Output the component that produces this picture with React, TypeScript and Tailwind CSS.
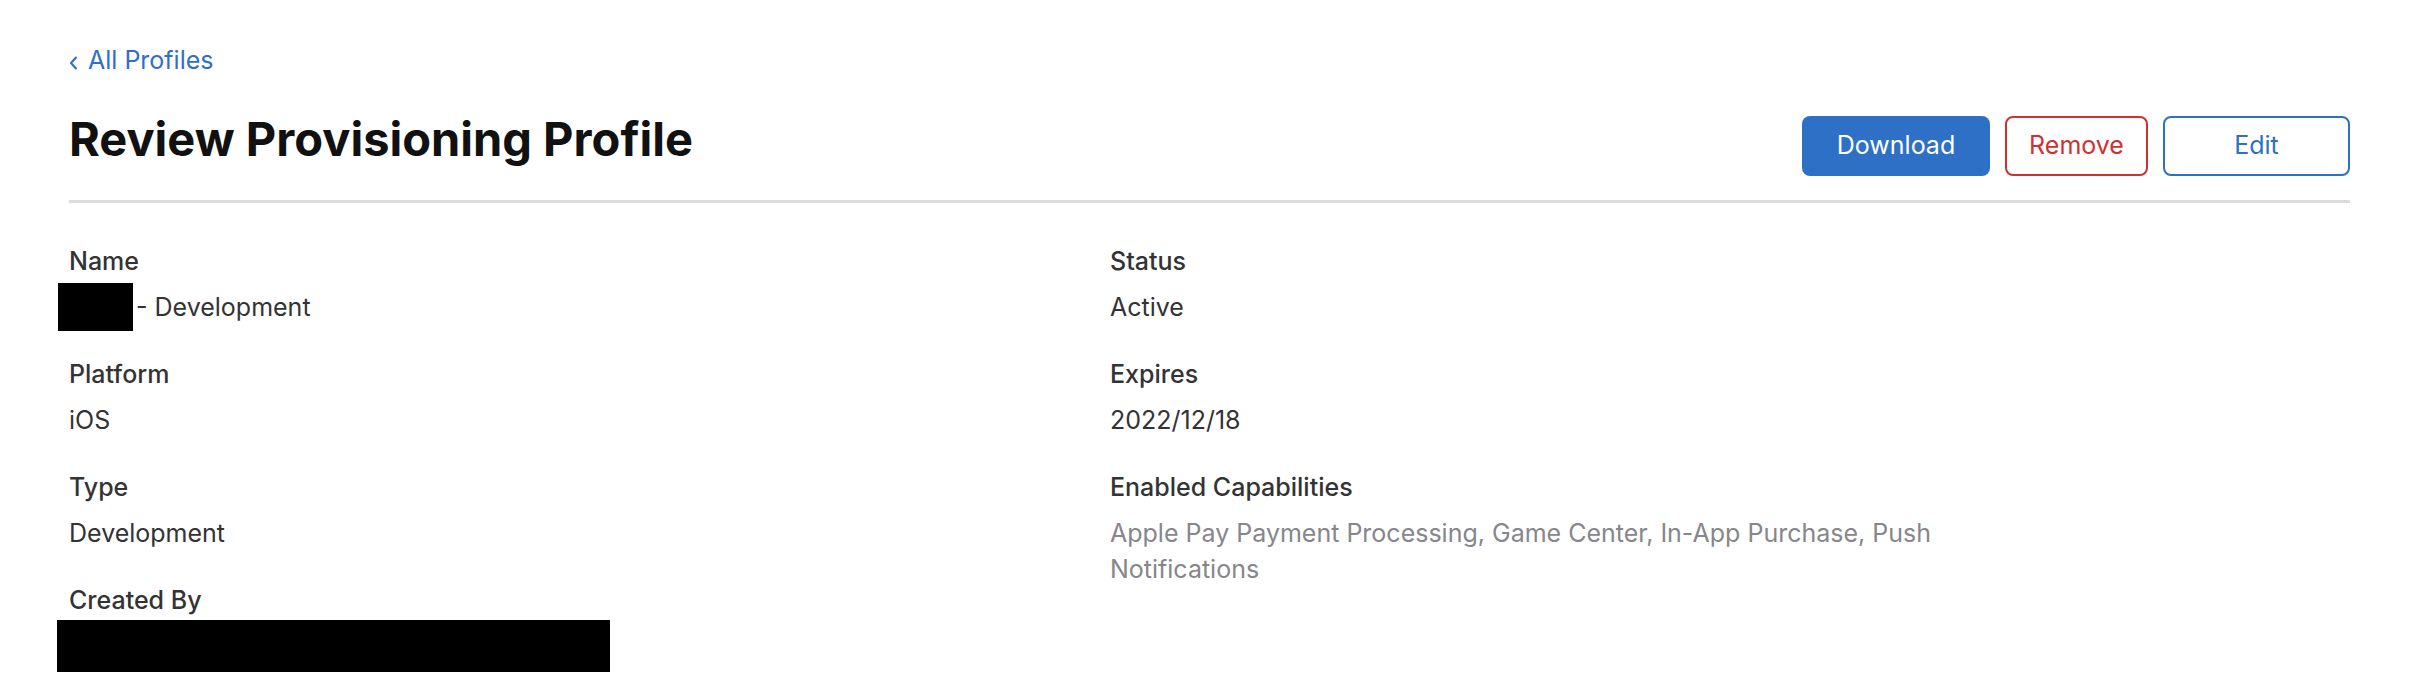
const fields = [
  { label: "Platform", value: "iOS" },
  { label: "Type", value: "Development" },
];

function Field({ label, children }: { label: string; children: React.ReactNode }) {
  return (
    <div>
      <div className="text-[25px] leading-[36px] font-medium text-[#333336]">{label}</div>
      <div className="mt-[10px] h-[36px] text-[25px] leading-[36px] text-[#333336]">{children}</div>
    </div>
  );
}

export default function App() {
  return (
    <div className="min-h-[696px] bg-white font-['Inter',sans-serif] antialiased">
      <div className="ml-[69px] w-[2281px] pt-[43px]">
        <a href="#" className="flex h-[36px] items-center text-[25px] text-[#2f6fc7]">
          <svg width="9" height="14" viewBox="0 0 9 14" className="mr-[10px] mt-[4px]">
            <path d="M7 1.5 2 7l5 5.5" fill="none" stroke="currentColor" strokeWidth="2" strokeLinecap="round" strokeLinejoin="round" />
          </svg>
          All Profiles
        </a>

        <div className="mt-[36px] flex items-start justify-between">
          <h1 className="text-[47px] leading-[48px] font-bold text-[#111111]">
            Review Provisioning Profile
          </h1>
          <div className="mt-[1px] flex gap-[15px]">
            <button className="h-[60px] w-[188px] rounded-[8px] bg-[#2e70c5] text-[25px] text-white">
              Download
            </button>
            <button className="h-[60px] w-[143px] rounded-[8px] border-2 border-[#d03030] text-[25px] text-[#d03030]">
              Remove
            </button>
            <button className="h-[60px] w-[187px] rounded-[8px] border-2 border-[#2e70c5] text-[25px] text-[#2e70c5]">
              Edit
            </button>
          </div>
        </div>

        <div className="mt-[24px] h-[3px] bg-[#dcdcdc]" />

        <div className="mt-[40px] grid grid-cols-[1041px_1fr]">
          <div className="flex flex-col gap-[31px]">
            <Field label="Name">
              <div className="flex h-[36px] items-center">
                <div className="-my-[6px] -ml-[11px] h-[48px] w-[75px] shrink-0 bg-black" />
                <span className="ml-[3px]">- Development</span>
              </div>
            </Field>
            {fields.map((f) => (
              <Field key={f.label} label={f.label}>
                {f.value}
              </Field>
            ))}
            <div>
              <div className="text-[25px] leading-[36px] font-medium text-[#333336]">Created By</div>
              <div className="-ml-[12px] mt-[2px] h-[52px] w-[553px] bg-black" />
            </div>
          </div>

          <div className="flex flex-col gap-[31px]">
            <Field label="Status">Active</Field>
            <Field label="Expires">2022/12/18</Field>
            <div>
              <div className="text-[25px] leading-[36px] font-medium text-[#333336]">Enabled Capabilities</div>
              <div className="mt-[10px] max-w-[880px] text-[25px] leading-[36px] text-[#86868b]">
                Apple Pay Payment Processing, Game Center, In-App Purchase, Push Notifications
              </div>
            </div>
          </div>
        </div>
      </div>
    </div>
  );
}
